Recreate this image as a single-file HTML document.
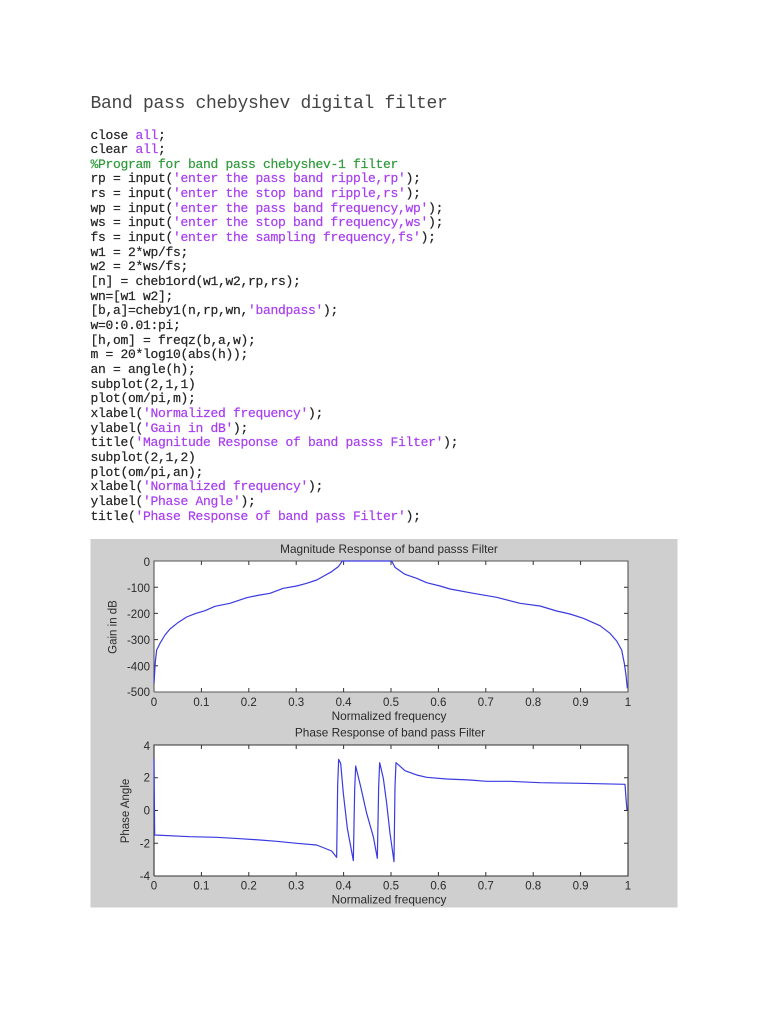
<!DOCTYPE html>
<html><head><meta charset="utf-8">
<style>
html,body{margin:0;padding:0;background:#fff;width:768px;height:1024px;overflow:hidden}
.t{position:absolute;left:90.5px;top:93.8px;font:18px/20px "Liberation Mono",monospace;letter-spacing:-.3px;color:#444;white-space:pre;filter:blur(.35px)}
pre{position:absolute;left:90.5px;top:128.5px;margin:0;font:13px/14.65px "Liberation Mono",monospace;letter-spacing:-.3px;color:#222;-webkit-text-stroke:.2px;filter:blur(.35px)}
pre b{font-weight:normal;color:#a83cf0}
pre i{font-style:normal;color:#2f9a3a}
svg{position:absolute;left:0;top:0;filter:blur(.3px)}
svg text{font-family:"Liberation Sans",sans-serif;font-size:11.5px;fill:#2a2a2a}
svg text.h{font-size:11.8px}
</style></head><body>
<div class="t">Band pass chebyshev digital filter</div>
<pre>close <b>all</b>;
clear <b>all</b>;
<i>%Program for band pass chebyshev-1 filter</i>
rp = input(<b>'enter the pass band ripple,rp'</b>);
rs = input(<b>'enter the stop band ripple,rs'</b>);
wp = input(<b>'enter the pass band frequency,wp'</b>);
ws = input(<b>'enter the stop band frequency,ws'</b>);
fs = input(<b>'enter the sampling frequency,fs'</b>);
w1 = 2*wp/fs;
w2 = 2*ws/fs;
[n] = cheb1ord(w1,w2,rp,rs);
wn=[w1 w2];
[b,a]=cheby1(n,rp,wn,<b>'bandpass'</b>);
w=0:0.01:pi;
[h,om] = freqz(b,a,w);
m = 20*log10(abs(h));
an = angle(h);
subplot(2,1,1)
plot(om/pi,m);
xlabel(<b>'Normalized frequency'</b>);
ylabel(<b>'Gain in dB'</b>);
title(<b>'Magnitude Response of band passs Filter'</b>);
subplot(2,1,2)
plot(om/pi,an);
xlabel(<b>'Normalized frequency'</b>);
ylabel(<b>'Phase Angle'</b>);
title(<b>'Phase Response of band pass Filter'</b>);</pre>
<svg width="768" height="1024" viewBox="0 0 768 1024">
<rect x="90.5" y="539" width="587" height="368.5" fill="#cfcfcf"/>
<!-- plot 1 -->
<rect x="154" y="561" width="474" height="131" fill="#fff"/>
<path d="M154 692V561H628V692H154" fill="none" stroke="#555" stroke-width="1.1"/>
<path d="M201.4 692v-4M248.8 692v-4M296.2 692v-4M343.6 692v-4M391 692v-4M438.4 692v-4M485.8 692v-4M533.2 692v-4M580.6 692v-4M201.4 561v4M248.8 561v4M296.2 561v4M343.6 561v4M391 561v4M438.4 561v4M485.8 561v4M533.2 561v4M580.6 561v4M154 587.2h4M154 613.4h4M154 639.6h4M154 665.8h4M628 587.2h-4M628 613.4h-4M628 639.6h-4M628 665.8h-4" stroke="#333" stroke-width="1" fill="none"/>
<!-- plot 2 -->
<rect x="154" y="745" width="474" height="131" fill="#fff"/>
<path d="M154 876V745H628V876H154" fill="none" stroke="#333" stroke-width="1.1"/>
<path d="M201.4 876v-4M248.8 876v-4M296.2 876v-4M343.6 876v-4M391 876v-4M438.4 876v-4M485.8 876v-4M533.2 876v-4M580.6 876v-4M201.4 745v4M248.8 745v4M296.2 745v4M343.6 745v4M391 745v4M438.4 745v4M485.8 745v4M533.2 745v4M580.6 745v4M154 777.75h4M154 810.5h4M154 843.25h4M628 777.75h-4M628 810.5h-4M628 843.25h-4" stroke="#333" stroke-width="1" fill="none"/>
<!-- curves -->
<g transform="translate(90,535) scale(.33333)" fill="none" stroke="#3a3ae0" stroke-width="3.6" stroke-linejoin="round">
<path d="M192 445L196 380L200 345L210 325L225 300L240 282L265 262L290 246L315 236L345 227L375 214L420 205L470 188L510 180L540 175L580 160L620 153L650 145L680 135L725 110L745 95L757 78H905L915 97L945 118L980 130L1010 143L1050 153L1080 162L1150 175L1220 187L1290 205L1350 213L1400 228L1440 237L1480 250L1530 272L1560 295L1580 318L1595 345L1603 385L1608 420L1612 460"/>
</g>
<g transform="translate(90,720) scale(.33333)" fill="none" stroke="#3a3ae0" stroke-width="3.6" stroke-linejoin="round">
<path d="M192 115L193 230L194 345L300 350L380 352L450 356L510 360L560 364L620 370L680 375L725 393L740 412L741 340L743 195L746 118L752 130L760 220L772 325L790 422L794 210L797 138L812 200L830 280L850 350L862 415L866 200L869 128L880 175L890 250L900 340L912 425L915 200L918 128L945 152L980 165L1010 172L1070 177L1140 180L1190 184L1260 184L1350 188L1470 190L1605 193L1608 235L1611 270"/>
</g>
<!-- titles -->
<text class="h" x="389" y="553" text-anchor="middle">Magnitude Response of band passs Filter</text>
<text class="h" x="390" y="736.5" text-anchor="middle">Phase Response of band pass Filter</text>
<text class="h" x="389" y="720" text-anchor="middle">Normalized frequency</text>
<text class="h" x="389" y="903.5" text-anchor="middle">Normalized frequency</text>
<text transform="translate(116.5,627) rotate(-90)" text-anchor="middle">Gain in dB</text>
<text transform="translate(129,811) rotate(-90)" text-anchor="middle">Phase Angle</text>
<!-- y ticks -->
<g text-anchor="end">
<text x="150" y="566">0</text><text x="150" y="592">-100</text><text x="150" y="618">-200</text><text x="150" y="644">-300</text><text x="150" y="670.5">-400</text><text x="150" y="696">-500</text>
<text x="150" y="750">4</text><text x="150" y="781.5">2</text><text x="150" y="814.5">0</text><text x="150" y="847.5">-2</text><text x="150" y="880">-4</text>
</g>
<!-- x ticks -->
<g text-anchor="middle">
<text x="154" y="706">0</text><text x="201.4" y="706">0.1</text><text x="248.8" y="706">0.2</text><text x="296.2" y="706">0.3</text><text x="343.6" y="706">0.4</text><text x="391" y="706">0.5</text><text x="438.4" y="706">0.6</text><text x="485.8" y="706">0.7</text><text x="533.2" y="706">0.8</text><text x="580.6" y="706">0.9</text><text x="628" y="706">1</text>
<text x="154" y="889.5">0</text><text x="201.4" y="889.5">0.1</text><text x="248.8" y="889.5">0.2</text><text x="296.2" y="889.5">0.3</text><text x="343.6" y="889.5">0.4</text><text x="391" y="889.5">0.5</text><text x="438.4" y="889.5">0.6</text><text x="485.8" y="889.5">0.7</text><text x="533.2" y="889.5">0.8</text><text x="580.6" y="889.5">0.9</text><text x="628" y="889.5">1</text>
</g>
</svg>
</body></html>
